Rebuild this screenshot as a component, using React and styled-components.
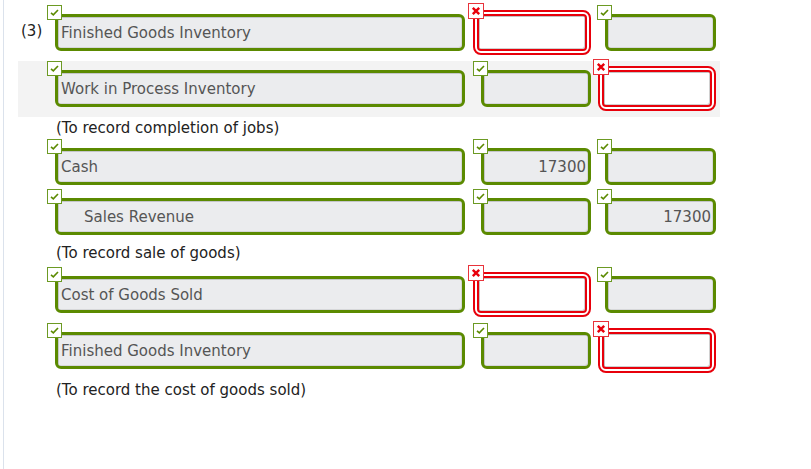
import styled, { createGlobalStyle } from "styled-components";

const GlobalStyle = createGlobalStyle`
  html, body {
    margin: 0;
    padding: 0;
    background: #fff;
  }
  body {
    font-family: Verdana, "DejaVu Sans", sans-serif;
  }
`;

const Page = styled.div`
  box-sizing: border-box;
  height: 469px;
  margin-left: 3px;
  border-left: 1px solid #dbe2ec;
  padding: 5px 0 0 14px;
`;

const Entry = styled.div`
  width: 702px;
`;

const Row = styled.div`
  box-sizing: border-box;
  display: grid;
  grid-template-columns: 37px 410px 126px 125px;
  align-items: center;
  min-height: 50px;
  padding: 5px 0 6px;
  background: ${(p) => (p.$shaded ? "#f3f3f3" : "transparent")};
`;

const Label = styled.div`
  font-size: 15px;
  color: #222;
  padding-left: 3px;
  margin-top: -4px;
`;

const Cell = styled.div`
  position: relative;
  justify-self: ${(p) => (p.$wide ? "stretch" : "end")};
  width: ${(p) => (p.$wide ? "auto" : p.$w || "110px")};
`;

const GreenField = styled.div`
  box-sizing: border-box;
  height: 37px;
  border: 3px solid #5b8a00;
  border-radius: 6px;
  background: #ebecee;
  box-shadow: inset 1px 1px 0 #c4c6c9, inset -1px -1px 0 #d6d7d9;
  display: flex;
  align-items: center;
  justify-content: ${(p) => (p.$num ? "flex-end" : "flex-start")};
  padding: 0 ${(p) => (p.$num ? "2px" : "3px")} 0 ${(p) => p.$indent || "3px"};
  font-size: 15px;
  color: #555;
  white-space: nowrap;
`;

const RedOuter = styled.div`
  box-sizing: border-box;
  width: 118px;
  height: 45px;
  border: 2px solid #e8000b;
  border-radius: 8px;
  padding: 2px;
  background: #fff;
`;

const RedInner = styled.div`
  box-sizing: border-box;
  height: 100%;
  border: 2px solid #e8000b;
  border-radius: 4px;
  background: #fff;
  box-shadow: inset 1px 1px 0 #c4c4c4, inset -1px -1px 0 #d0d0d0;
`;

const Badge = styled.span`
  position: absolute;
  box-sizing: border-box;
  display: flex;
  align-items: center;
  justify-content: center;
  background: #fff;
  width: ${(p) => (p.$bad ? "16px" : "15px")};
  height: ${(p) => (p.$bad ? "16px" : "15px")};
  left: ${(p) => (p.$bad ? "-5px" : "-8px")};
  top: ${(p) => (p.$bad ? "-7px" : "-9px")};
  border: 1px solid ${(p) => (p.$bad ? "#e8333b" : "#6c9a23")};
  z-index: 1;
`;

const Note = styled.div`
  height: 25px;
  line-height: 22px;
  padding-bottom: 3px;
  box-sizing: border-box;
  padding-left: 38px;
  font-size: 15px;
  color: #222;
`;

const Check = () => (
  <svg width="11" height="9" viewBox="0 0 11 9">
    <path d="M2 4.8 L4.3 6.8 L9 2" fill="none" stroke="#5b8a00" strokeWidth="1.6" />
  </svg>
);

const Cross = () => (
  <svg width="10" height="10" viewBox="0 0 10 10">
    <path d="M1.8 1.8 L8.2 8.2 M8.2 1.8 L1.8 8.2" stroke="#e8000b" strokeWidth="2.4" />
  </svg>
);

const Field = ({ wide, value, num, indent, bad, w }) => (
  <Cell $wide={wide} $w={bad ? "118px" : w}>
    <Badge $bad={bad}>{bad ? <Cross /> : <Check />}</Badge>
    {bad ? (
      <RedOuter>
        <RedInner />
      </RedOuter>
    ) : (
      <GreenField $num={num} $indent={indent}>
        {value}
      </GreenField>
    )}
  </Cell>
);

const lines = [
  { label: "(3)", account: "Finished Goods Inventory", debit: { bad: true }, credit: {} },
  { account: "Work in Process Inventory", debit: {}, credit: { bad: true }, shaded: true },
  { note: "(To record completion of jobs)" },
  { account: "Cash", debit: { value: "17300" }, credit: {} },
  { account: "Sales Revenue", indent: "26px", debit: {}, credit: { value: "17300" } },
  { note: "(To record sale of goods)" },
  { account: "Cost of Goods Sold", debit: { bad: true }, credit: {} },
  { account: "Finished Goods Inventory", debit: {}, credit: { bad: true } },
  { note: "(To record the cost of goods sold)" },
];

export default function App() {
  return (
    <>
      <GlobalStyle />
      <Page>
        <Entry>
          {lines.map((l, i) =>
            l.note ? (
              <Note key={i}>{l.note}</Note>
            ) : (
              <Row key={i} $shaded={l.shaded}>
                <Label>{l.label}</Label>
                <Field wide value={l.account} indent={l.indent} />
                <Field {...l.debit} num w="110px" />
                <Field {...l.credit} num w="111px" />
              </Row>
            )
          )}
        </Entry>
      </Page>
    </>
  );
}
